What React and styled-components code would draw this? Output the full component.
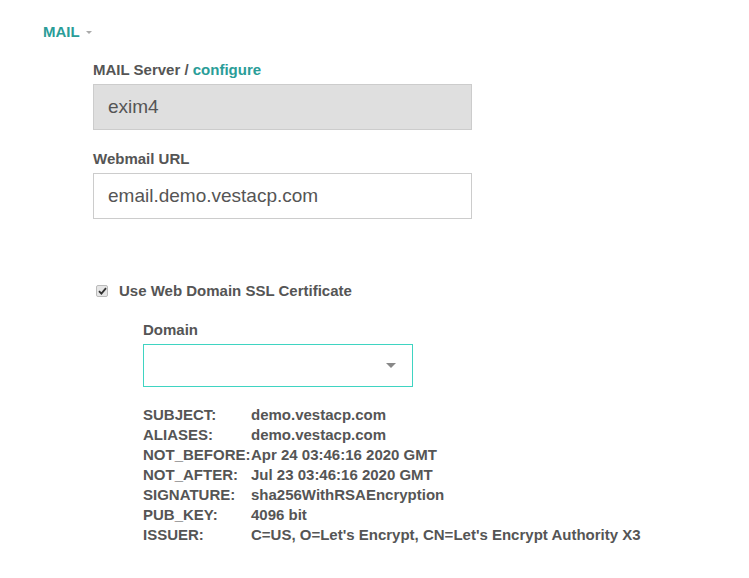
import React from "react";
import styled, { createGlobalStyle } from "styled-components";

const GlobalStyle = createGlobalStyle`
  body {
    margin: 0;
    background: #fff;
    font-family: "Liberation Sans", Arial, sans-serif;
    color: #555;
  }
`;

const Page = styled.div`
  width: 749px;
  height: 578px;
  padding: 23px 0 0 43px;
  box-sizing: border-box;
`;

const SectionTitle = styled.div`
  display: flex;
  align-items: center;
  gap: 6px;
  font-size: 15px;
  line-height: 18px;
  font-weight: bold;
  color: #2a9d98;
  cursor: pointer;
`;

const Caret = styled.span`
  width: 0;
  height: 0;
  border-left: 3px solid transparent;
  border-right: 3px solid transparent;
  border-top: 3px solid #aaa;
`;

const Body = styled.div`
  padding: 20px 0 0 50px;
`;

const Field = styled.div`
  margin-bottom: 20px;
`;

const Label = styled.div`
  font-size: 15px;
  line-height: 18px;
  font-weight: bold;
  color: #555;
  margin-bottom: 5px;
  a {
    color: #2a9d98;
    text-decoration: none;
  }
`;

const TextBox = styled.input`
  display: block;
  box-sizing: border-box;
  width: 379px;
  height: 46px;
  padding: 0 14px;
  font-family: "Liberation Sans", Arial, sans-serif;
  font-size: 19px;
  color: #555;
  border: 1px solid #ccc;
  background: ${(props) => (props.disabled ? "#dfdfdf" : "#fff")};
  outline: none;
`;

const CheckRow = styled.label`
  display: flex;
  align-items: center;
  gap: 11px;
  margin: 63px 0 0 3px;
  font-size: 15px;
  line-height: 18px;
  font-weight: bold;
  color: #555;
`;

const Box = styled.span`
  width: 10px;
  height: 10px;
  border: 1px solid #bbb;
  border-radius: 2px;
  background: #e6e6e6;
  display: flex;
  align-items: center;
  justify-content: center;
`;

const Nested = styled.div`
  padding: 21px 0 0 50px;
`;

const Select = styled.div`
  box-sizing: border-box;
  width: 270px;
  height: 43px;
  border: 1px solid #3fd4c2;
  display: flex;
  align-items: center;
  justify-content: flex-end;
  padding-right: 16px;
`;

const SelectArrow = styled.span`
  width: 0;
  height: 0;
  border-left: 5px solid transparent;
  border-right: 5px solid transparent;
  border-top: 5px solid #888;
`;

const CertTable = styled.div`
  display: grid;
  grid-template-columns: 108px auto;
  margin-top: 18px;
  font-size: 15px;
  font-weight: bold;
  line-height: 20px;
  color: #555;
  white-space: nowrap;
`;

const cert = [
  ["SUBJECT:", "demo.vestacp.com"],
  ["ALIASES:", "demo.vestacp.com"],
  ["NOT_BEFORE:", "Apr 24 03:46:16 2020 GMT"],
  ["NOT_AFTER:", "Jul 23 03:46:16 2020 GMT"],
  ["SIGNATURE:", "sha256WithRSAEncryption"],
  ["PUB_KEY:", "4096 bit"],
  ["ISSUER:", "C=US, O=Let's Encrypt, CN=Let's Encrypt Authority X3"],
];

export default function App() {
  return (
    <>
      <GlobalStyle />
      <Page>
        <SectionTitle>
          MAIL <Caret />
        </SectionTitle>
        <Body>
          <Field>
            <Label>
              MAIL Server / <a href="#">configure</a>
            </Label>
            <TextBox disabled value="exim4" readOnly />
          </Field>
          <Field>
            <Label>Webmail URL</Label>
            <TextBox value="email.demo.vestacp.com" readOnly />
          </Field>
          <CheckRow>
            <Box>
              <svg width="9" height="8" viewBox="0 0 9 8">
                <path d="M1 4.2 L3.4 6.6 L8 1.2" stroke="#333" strokeWidth="1.8" fill="none" />
              </svg>
            </Box>
            Use Web Domain SSL Certificate
          </CheckRow>
          <Nested>
            <Label>Domain</Label>
            <Select>
              <SelectArrow />
            </Select>
            <CertTable>
              {cert.map(([k, v]) => (
                <React.Fragment key={k}>
                  <span>{k}</span>
                  <span>{v}</span>
                </React.Fragment>
              ))}
            </CertTable>
          </Nested>
        </Body>
      </Page>
    </>
  );
}
